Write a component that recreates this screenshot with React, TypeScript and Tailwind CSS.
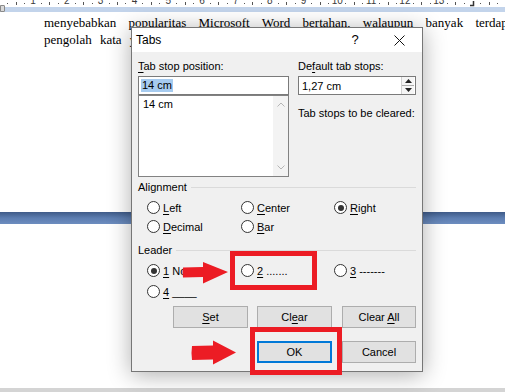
import React from 'react';

const ui = { fontFamily: '"Liberation Sans", Arial, sans-serif' };
const serif = { fontFamily: '"Liberation Serif", "Times New Roman", serif' };

function U({ children }: { children: React.ReactNode }) {
    return <span className="underline underline-offset-[2px] decoration-[1px]">{children}</span>;
}

function Radio({ checked, children }: { checked?: boolean; children: React.ReactNode }) {
    return (
        <div className="flex items-center gap-[3px] h-[19px]">
            <span className="w-[13px] h-[13px] rounded-full border border-[#333] bg-white flex items-center justify-center shrink-0">
                {checked && <span className="w-[6px] h-[6px] rounded-full bg-[#333]" />}
            </span>
            <span className="whitespace-nowrap">{children}</span>
        </div>
    );
}

function GroupLabel({ text }: { text: string }) {
    return (
        <div className="flex items-center gap-[4px] h-[14px]">
            <span>{text}</span>
            <div className="flex-1 h-px bg-[#dadada]" />
        </div>
    );
}

function Btn({ children, w, primary }: { children: React.ReactNode; w: string; primary?: boolean }) {
    return (
        <div
            className={`${w} h-[22px] flex items-center justify-center bg-[#e1e1e1] ${
                primary ? 'border-2 border-[#0078d7]' : 'border border-[#adadad]'
            }`}
        >
            <span className="whitespace-pre">{children}</span>
        </div>
    );
}

function Ruler() {
    const nums = [1, 2, 3, 4, 5, 6, 7, 8, 9, 10, 11, 12, 13, 14];
    const Dot = () => (
        <div className="w-[8.46px] flex justify-center pt-[3px]">
            <span className="w-px h-px bg-[#555]" />
        </div>
    );
    const Tick = () => (
        <div className="w-[8.46px] flex justify-center pt-[2px]">
            <span className="w-px h-[3px] bg-[#555]" />
        </div>
    );
    return (
        <div className="relative h-[7px] bg-white overflow-hidden flex pl-[3.4px]">
            <Dot />
            <Tick />
            <Dot />
            {nums.map((n) => (
                <div key={n} className="flex">
                    <div className="w-[8.46px] flex justify-center">
                        {n === 14 ? (
                            <svg width="7" height="7" viewBox="0 0 7 7">
                                <path d="M4.5 1V5.5H1" stroke="#333" strokeWidth="1.5" fill="none" />
                            </svg>
                        ) : (
                            <span className="relative -top-[4px] text-[10px] leading-[10px] text-[#3a3a3a]">{n}</span>
                        )}
                    </div>
                    <Dot />
                    <Tick />
                    <Dot />
                </div>
            ))}
        </div>
    );
}

export default function App() {
    return (
        <div className="relative w-[505px] h-[392px] overflow-hidden bg-white" style={ui}>
            {/* Word document behind */}
            <div className="flex flex-col">
                <Ruler />
                <div className="relative h-[5px] bg-[#c3d4eb]">
                    <div className="absolute left-0 -top-[2px] w-[5px] h-[7px] bg-[#d8d8d8] border border-[#8a8a8a] rounded-r-[1px]" />
                </div>
                <div className="h-[200px] pl-[44px] pt-[2px] text-[13px] leading-[17px] text-black" style={serif}>
                    <div className="whitespace-nowrap [word-spacing:9px]">
                        menyebabkan popularitas Microsoft Word bertahan, walaupun banyak terdapat
                    </div>
                    <div className="whitespace-nowrap [word-spacing:5px]">pengolah kata yang lain.</div>
                </div>
                <div className="h-[12px] bg-gradient-to-b from-[#3f5b88] via-[#5c7db0] to-[#6d8dbf]" />
                <div className="h-[164px] bg-white" />
                <div className="h-[4px] bg-[#d4d4d4]" />
            </div>

            {/* Tabs dialog */}
            <div className="absolute left-[131px] top-[27px] w-[292px] h-[345px] border border-[#767676] bg-[#f0f0f0] shadow-[0_3px_22px_rgba(0,0,0,0.32)] text-[11px] leading-[14px] text-black flex flex-col">
                <div className="h-[24px] bg-white flex items-center pl-[4px] text-[12px]">
                    <span className="flex-1">Tabs</span>
                    <span className="w-[12px] text-center text-[13px] mr-[33px]">?</span>
                    <svg width="11" height="11" viewBox="0 0 11 11" className="mr-[17px]">
                        <path d="M0.5 0.5L10.5 10.5M10.5 0.5L0.5 10.5" stroke="#111" strokeWidth="1" />
                    </svg>
                </div>

                <div className="px-[6px] flex flex-col">
                    <div className="flex gap-[9px] mt-[7px]">
                        <div className="w-[151px] flex flex-col">
                            <div>
                                <U>T</U>ab stop position:
                            </div>
                            <div className="mt-[3px] h-[19px] bg-white border border-[#7a7a7a] flex items-center pl-[2px]">
                                <span className="bg-[#a6cbef] px-[1px] leading-[13px]">14 cm</span>
                            </div>
                            <div className="h-[82px] bg-white border border-[#828282] flex">
                                <div className="flex-1 pl-[4px] pt-[1px]">14 cm</div>
                                <div className="w-[15px] bg-[#f3f3f3] flex flex-col items-center justify-between py-[6px]">
                                    <svg width="8" height="5" viewBox="0 0 8 5">
                                        <path d="M0.5 4.5L4 1L7.5 4.5" stroke="#b5b5b5" fill="none" />
                                    </svg>
                                    <svg width="8" height="5" viewBox="0 0 8 5">
                                        <path d="M0.5 0.5L4 4L7.5 0.5" stroke="#b5b5b5" fill="none" />
                                    </svg>
                                </div>
                            </div>
                        </div>
                        <div className="w-[118px] flex flex-col">
                            <div>
                                De<U>f</U>ault tab stops:
                            </div>
                            <div className="mt-[3px] h-[19px] bg-white border border-[#7a7a7a] flex items-center">
                                <span className="flex-1 pl-[3px]">1,27 cm</span>
                                <div className="w-[13px] h-full flex flex-col border-l border-[#d0d0d0] bg-[#f5f5f5] mr-[1px]">
                                    <div className="flex-1 flex items-center justify-center border-b border-[#adadad]">
                                        <svg width="7" height="4" viewBox="0 0 7 4">
                                            <path d="M0 4L3.5 0L7 4Z" fill="#222" />
                                        </svg>
                                    </div>
                                    <div className="flex-1 flex items-center justify-center">
                                        <svg width="7" height="4" viewBox="0 0 7 4">
                                            <path d="M0 0L3.5 4L7 0Z" fill="#222" />
                                        </svg>
                                    </div>
                                </div>
                            </div>
                            <div className="mt-[11px]">Tab stops to be cleared:</div>
                        </div>
                    </div>

                    <div className="mt-[3px]">
                        <GroupLabel text="Alignment" />
                    </div>
                    <div className="mt-[4px] grid grid-cols-[94px_93px_1fr] pl-[9px]">
                        <Radio>
                            <U>L</U>eft
                        </Radio>
                        <Radio>
                            <U>C</U>enter
                        </Radio>
                        <Radio checked>
                            <U>R</U>ight
                        </Radio>
                        <Radio>
                            <U>D</U>ecimal
                        </Radio>
                        <Radio>
                            <U>B</U>ar
                        </Radio>
                    </div>

                    <div className="mt-[7px]">
                        <GroupLabel text="Leader" />
                    </div>
                    <div className="mt-[4px] grid grid-cols-[94px_93px_1fr] gap-y-[2px] pl-[9px]">
                        <Radio checked>
                            <U>1</U> None
                        </Radio>
                        <Radio>
                            <U>2</U> .......
                        </Radio>
                        <Radio>
                            <U>3</U> -------
                        </Radio>
                        <Radio>
                            <U>4</U> ____
                        </Radio>
                    </div>

                    <div className="mt-[5px] flex">
                        <div className="ml-[35px]">
                            <Btn w="w-[75px]">
                                <U>S</U>et
                            </Btn>
                        </div>
                        <div className="ml-[9px]">
                            <Btn w="w-[75px]">
                                Cl<U>e</U>ar
                            </Btn>
                        </div>
                        <div className="ml-[10px]">
                            <Btn w="w-[74px]">
                                Clear <U>A</U>ll
                            </Btn>
                        </div>
                    </div>
                    <div className="mt-[13px] flex">
                        <div className="ml-[119px]">
                            <Btn w="w-[75px]" primary>
                                OK
                            </Btn>
                        </div>
                        <div className="ml-[10px]">
                            <Btn w="w-[74px]">Cancel</Btn>
                        </div>
                    </div>
                </div>
            </div>

            {/* red annotations */}
            <div className="absolute left-[230px] top-[251px] w-[87px] h-[39px] border-[5px] border-[#ec1c24]" />
            <div className="absolute left-[250px] top-[327px] w-[92px] h-[48px] border-[5px] border-[#ec1c24]" />
            <svg className="absolute left-[182px] top-[261px]" width="47" height="23" viewBox="0 0 47 23">
                <path d="M1 6.5Q0 11 1 16.5L21 16L21 22.5L46 11L21 1L21 6Z" fill="#ec1c24" />
            </svg>
            <svg className="absolute left-[191px] top-[340px]" width="46" height="25" viewBox="0 0 46 25">
                <path d="M1 6Q0 12.5 1 20L22 19.5L22 24.5L45 12.5L22 0.5L22 5.5Z" fill="#ec1c24" />
            </svg>
        </div>
    );
}
